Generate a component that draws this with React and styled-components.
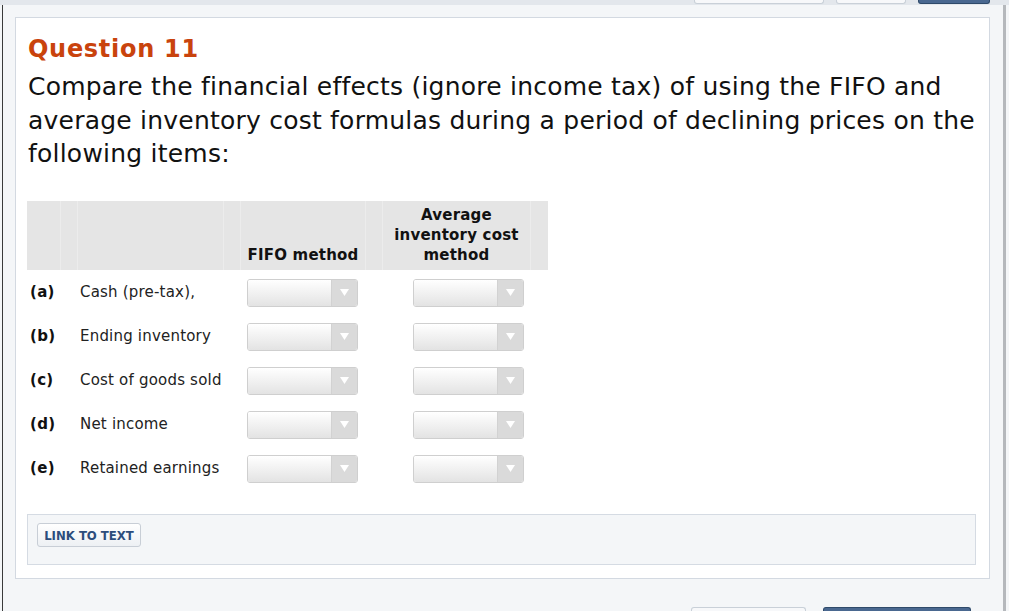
import React from "react";
import styled, { createGlobalStyle } from "styled-components";

const GlobalStyle = createGlobalStyle`
  html, body {
    margin: 0;
    padding: 0;
    background: #f4f6f8;
  }
  body {
    font-family: "DejaVu Sans", Verdana, sans-serif;
    color: #222;
  }
`;

const rows = [
  { key: "(a)", label: "Cash (pre-tax)," },
  { key: "(b)", label: "Ending inventory" },
  { key: "(c)", label: "Cost of goods sold" },
  { key: "(d)", label: "Net income" },
  { key: "(e)", label: "Retained earnings" },
];

const COLS = "33px 17px 146px 17px 125px 17px 148px 18px";

const App = () => {
  return (
    <>
      <GlobalStyle />
      <Page>
        <TopBar>
          <Stub $w={130} $tone="light" />
          <Stub $w={70} $tone="light" />
          <Stub $w={72} $tone="dark" />
        </TopBar>
        <Frame>
          <Card>
            <Title>Question 11</Title>
            <Prompt>
              Compare the financial effects (ignore income tax) of using the
              FIFO and average inventory cost formulas during a period of
              declining prices on the following items:
            </Prompt>

            <Grid>
              <HeadCell />
              <HeadCell />
              <HeadCell />
              <HeadCell />
              <HeadCell>FIFO method</HeadCell>
              <HeadCell />
              <HeadCell>
                Average
                <br />
                inventory cost
                <br />
                method
              </HeadCell>
              <HeadCell />

              {rows.map((row) => (
                <React.Fragment key={row.key}>
                  <KeyCell>{row.key}</KeyCell>
                  <Cell />
                  <LabelCell>{row.label}</LabelCell>
                  <Cell />
                  <Cell>
                    <Select $offset={7} />
                  </Cell>
                  <Cell />
                  <Cell>
                    <Select $offset={31} />
                  </Cell>
                  <Cell />
                </React.Fragment>
              ))}
            </Grid>

            <LinkPanel>
              <LinkButton type="button">LINK TO TEXT</LinkButton>
            </LinkPanel>
          </Card>
          <BottomBar>
            <Stub $w={115} $tone="light" $bottom />
            <Stub $w={148} $tone="dark" $bottom />
          </BottomBar>
        </Frame>
      </Page>
    </>
  );
};

const Select = ({ $offset }) => (
  <SelectBox $offset={$offset}>
    <SelectValue />
    <SelectArrow>
      <svg width="9" height="7" viewBox="0 0 9 7">
        <path d="M0 0 L9 0 L4.5 7 Z" fill="#fff" />
      </svg>
    </SelectArrow>
  </SelectBox>
);

const Page = styled.div`
  width: 1009px;
  height: 611px;
  display: flex;
  flex-direction: column;
  overflow: hidden;
  background: #f4f6f8;
`;

const TopBar = styled.div`
  height: 5px;
  flex: none;
  background: #e3e7ec;
  display: flex;
  justify-content: flex-end;
  gap: 12px;
  padding-right: 19px;
`;

const Stub = styled.div`
  width: ${({ $w }) => $w}px;
  height: 4px;
  box-sizing: border-box;
  border: 1px solid ${({ $tone }) => ($tone === "dark" ? "#2f4a6a" : "#c9d0d8")};
  border-top: ${({ $bottom }) => ($bottom ? "" : "none")};
  border-bottom: ${({ $bottom }) => ($bottom ? "none" : "")};
  border-radius: ${({ $bottom }) => ($bottom ? "3px 3px 0 0" : "0 0 3px 3px")};
  background: ${({ $tone }) => ($tone === "dark" ? "#4a6890" : "#f7f8fa")};
`;

const Frame = styled.div`
  flex: 1;
  display: flex;
  flex-direction: column;
  margin-left: 2px;
  margin-right: 3px;
  border-left: 1px solid #3a3a3a;
  border-right: 3px solid #b5b8bc;
  padding: 12px 12px 0 12px;
`;

const Card = styled.div`
  width: 975px;
  height: 562px;
  box-sizing: border-box;
  background: #fff;
  border: 1px solid #d3d9e1;
  padding: 15px 13px 13px 11px;
  display: flex;
  flex-direction: column;
`;

const Title = styled.h2`
  margin: 0 0 0 1px;
  font-size: 24px;
  letter-spacing: 0.7px;
  line-height: 32px;
  font-weight: bold;
  color: #c9430d;
`;

const Prompt = styled.p`
  margin: 5px 0 0 1px;
  font-size: 25px;
  letter-spacing: 0.22px;
  line-height: 33.5px;
  color: #111;
`;

const Grid = styled.div`
  margin-top: 30px;
  display: grid;
  grid-template-columns: ${COLS};
  font-size: 15px;
`;

const HeadCell = styled.div`
  height: 69px;
  background: #e5e5e5;
  border-left: 1px solid #ececec;
  box-sizing: border-box;
  display: flex;
  align-items: flex-end;
  justify-content: center;
  text-align: center;
  font-weight: bold;
  font-size: 15px;
  letter-spacing: 0.2px;
  line-height: 20px;
  padding-bottom: 5px;
  color: #111;

  &:first-child {
    border-left: none;
  }
`;

const Cell = styled.div`
  height: 44px;
  display: flex;
  align-items: center;
`;

const KeyCell = styled(Cell)`
  padding-left: 3px;
  font-weight: bold;
  font-size: 15px;
  letter-spacing: 0.3px;
  color: #111;
`;

const LabelCell = styled(Cell)`
  padding-left: 3px;
  font-size: 15px;
  letter-spacing: 0.2px;
  color: #222;
  white-space: nowrap;
`;

const SelectBox = styled.div`
  margin-left: ${({ $offset }) => $offset}px;
  margin-top: 2px;
  width: 111px;
  height: 28px;
  box-sizing: border-box;
  border: 1px solid #cfcfcf;
  border-radius: 3px;
  display: flex;
  overflow: hidden;
  flex: none;
`;

const SelectValue = styled.div`
  flex: 1;
  background: linear-gradient(#ffffff, #e3e3e3);
`;

const SelectArrow = styled.div`
  width: 25px;
  border-left: 1px solid #d2d2d2;
  background: #dadada;
  display: flex;
  align-items: center;
  justify-content: center;
`;

const LinkPanel = styled.div`
  margin-top: auto;
  height: 51px;
  box-sizing: border-box;
  background: #f4f6f8;
  border: 1px solid #d5dbe3;
  padding: 8px 9px;
`;

const LinkButton = styled.button`
  width: 104px;
  height: 24px;
  border: 1px solid #c8ced6;
  border-radius: 3px;
  background: linear-gradient(#ffffff, #edf0f4);
  font-family: "DejaVu Sans Condensed", "DejaVu Sans", sans-serif;
  font-weight: bold;
  font-size: 13px;
  color: #2c4d7c;
  padding: 0;
`;

const BottomBar = styled.div`
  margin-top: auto;
  display: flex;
  justify-content: flex-end;
  gap: 17px;
  padding-right: 20px;
`;

export default App;
